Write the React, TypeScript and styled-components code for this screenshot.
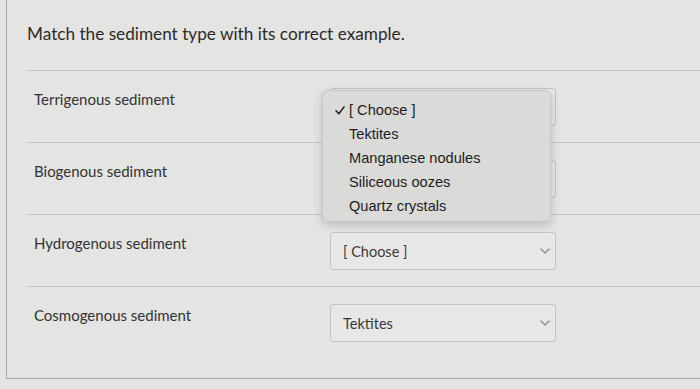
import React from 'react';
import styled, { createGlobalStyle } from 'styled-components';

const GlobalStyle = createGlobalStyle`
    html, body {
        margin: 0;
        padding: 0;
        background: #e4e4e2;
        overflow: hidden;
    }
    body {
        font-family: Lato, 'Open Sans', sans-serif;
    }
`;

type Pair = { label: string; value: string };

const pairs: Pair[] = [
    { label: 'Terrigenous sediment', value: '[ Choose ]' },
    { label: 'Biogenous sediment', value: '[ Choose ]' },
    { label: 'Hydrogenous sediment', value: '[ Choose ]' },
    { label: 'Cosmogenous sediment', value: 'Tektites' },
];

const options = [
    '[ Choose ]',
    'Tektites',
    'Manganese nodules',
    'Siliceous oozes',
    'Quartz crystals',
];

const Chevron: React.FC = () => (
    <svg width="10" height="6" viewBox="0 0 10 6" fill="none">
        <path d="M1 1l4 4 4-4" stroke="#8a8a8a" strokeWidth="1.3" strokeLinecap="round" strokeLinejoin="round" />
    </svg>
);

const CheckMark: React.FC = () => (
    <svg width="10" height="9" viewBox="0 0 10 9" fill="none">
        <path d="M1 4.8l2.8 3L9 1" stroke="#2a2a2a" strokeWidth="1.6" strokeLinecap="round" strokeLinejoin="round" />
    </svg>
);

export const App: React.FC = () => {
    return (
        <>
            <GlobalStyle />
            <Question>
                <Title>Match the sediment type with its correct example.</Title>
                <Rows>
                    {pairs.map((p, i) => (
                        <Row key={p.label}>
                            <Label>{p.label}</Label>
                            <SelectWrap>
                                <Select>
                                    <span>{p.value}</span>
                                    <Chevron />
                                </Select>
                                {i === 0 && (
                                    <Menu>
                                        {options.map((o, j) => (
                                            <MenuItem key={o}>
                                                <Tick>{j === 0 && <CheckMark />}</Tick>
                                                {o}
                                            </MenuItem>
                                        ))}
                                    </Menu>
                                )}
                            </SelectWrap>
                        </Row>
                    ))}
                </Rows>
            </Question>
        </>
    );
};

const Question = styled.div`
    margin-left: 6px;
    width: 720px;
    height: 379px;
    border-left: 1px solid #a9a9a7;
    border-bottom: 1px solid #a9a9a7;
    box-sizing: border-box;
    display: flex;
    flex-direction: column;
    padding-left: 20px;
`;

const Title = styled.div`
    height: 70px;
    padding-top: 23px;
    box-sizing: border-box;
    font-size: 17.2px;
    color: #2b2b2b;
`;

const Rows = styled.div`
    display: flex;
    flex-direction: column;
`;

const Row = styled.div`
    height: 72px;
    border-top: 1px solid #c6c6c4;
    display: grid;
    grid-template-columns: 303px 226px;
    box-sizing: border-box;
`;

const Label = styled.div`
    padding: 19px 0 0 7px;
    font-size: 15px;
    color: #333;
`;

const SelectWrap = styled.div`
    position: relative;
    padding-top: 17px;
`;

const Select = styled.div`
    height: 38px;
    box-sizing: border-box;
    border: 1px solid #c4c4c2;
    border-radius: 3px;
    background: #e7e7e5;
    display: flex;
    align-items: center;
    justify-content: space-between;
    padding: 0 5px 0 12px;
    font-size: 14.5px;
    color: #3a3a3a;
`;

const Menu = styled.div`
    position: absolute;
    top: 19px;
    left: -8px;
    width: 229px;
    height: 132px;
    box-sizing: border-box;
    padding: 7px 0 5px;
    background: #dadad8;
    border: 1px solid #c8c8c6;
    border-radius: 6px;
    box-shadow: 0 3px 10px rgba(0, 0, 0, 0.18);
    font-family: 'Liberation Sans', Arial, sans-serif;
    font-size: 14.6px;
    color: #1e1e1e;
    z-index: 2;
`;

const MenuItem = styled.div`
    height: 24px;
    display: flex;
    align-items: center;
    padding-left: 12px;
`;

const Tick = styled.span`
    width: 14px;
    display: inline-flex;
    align-items: center;
`;

export default App;
